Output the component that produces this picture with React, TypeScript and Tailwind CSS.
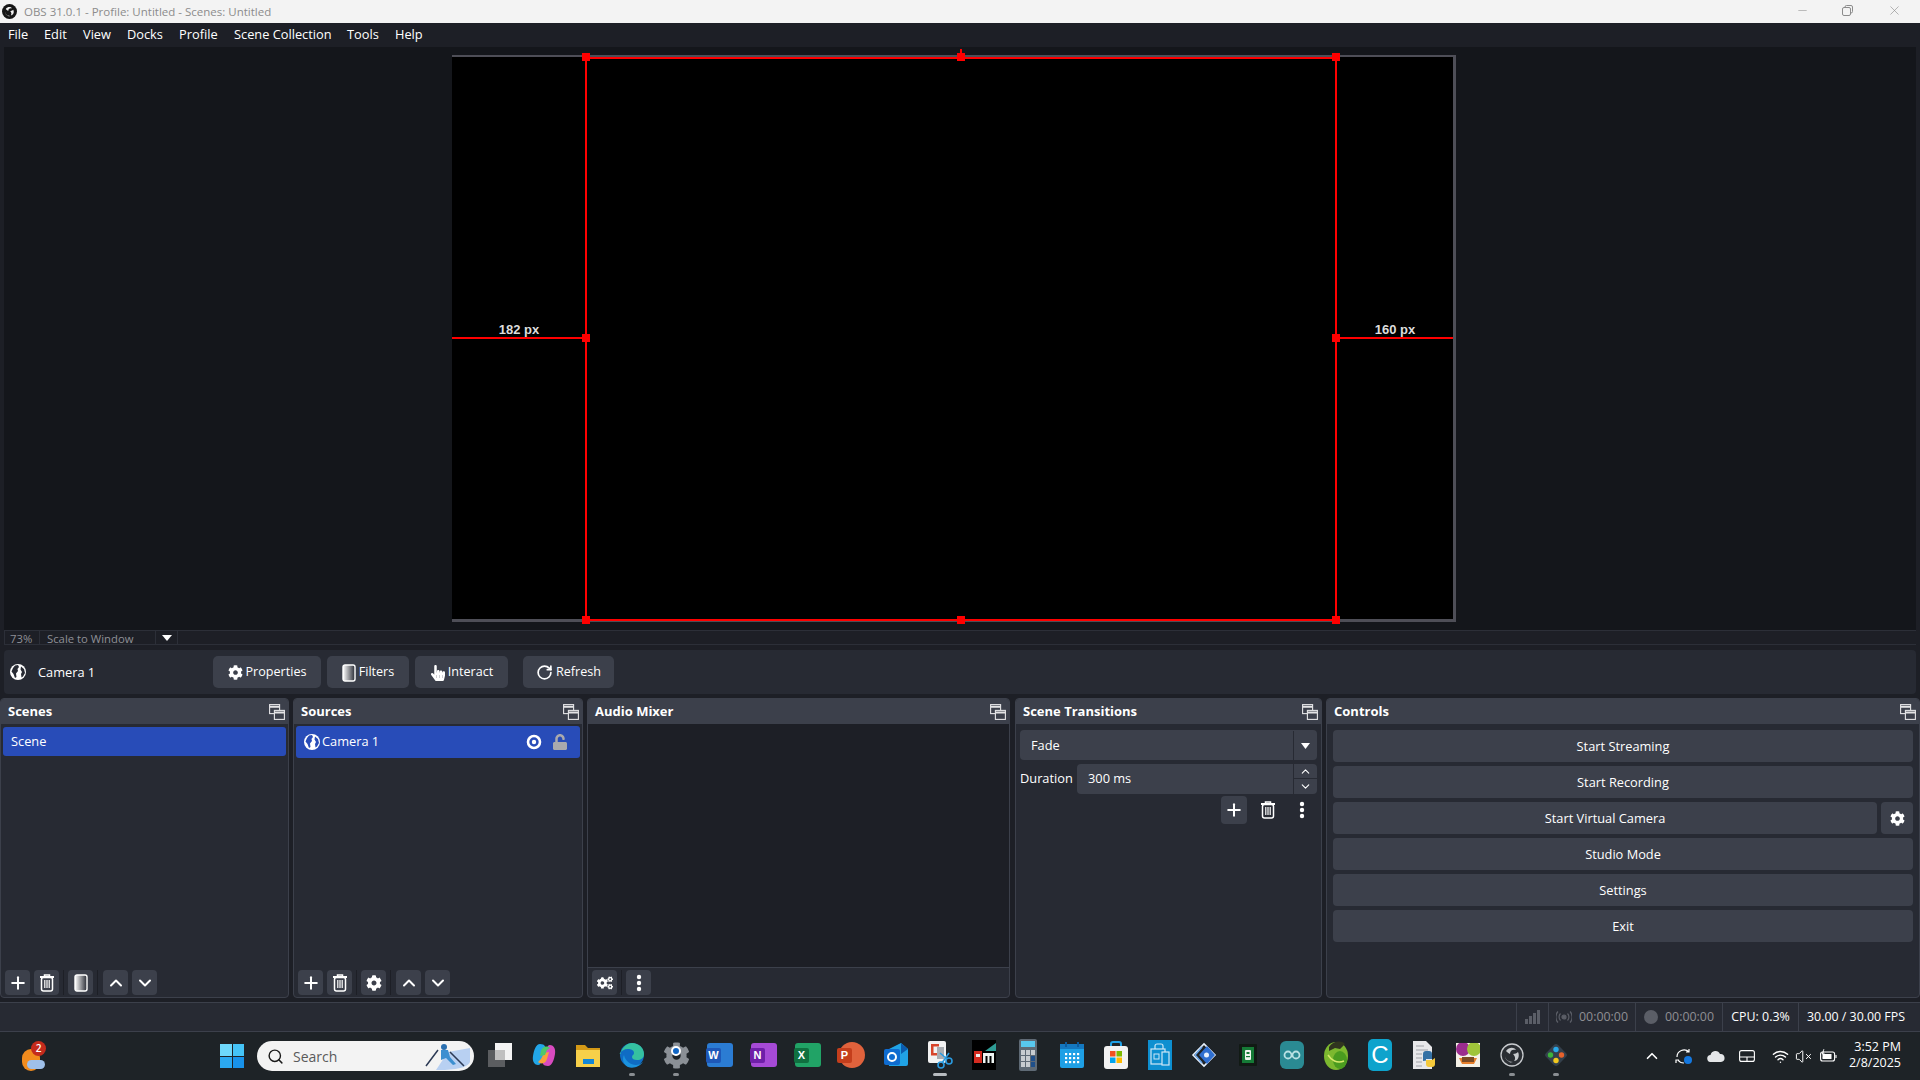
import type { ReactNode } from "react";
import { ChevronDown, ChevronUp, Minus, Plus, RotateCw, Search, VolumeX, Wifi, X } from "lucide-react";
import { FaCog, FaCogs, FaHandPointer, FaUnlock } from "react-icons/fa";

const MENU = [
  { label: "File", w: "w-[36px]" },
  { label: "Edit", w: "w-[39px]" },
  { label: "View", w: "w-[44px]" },
  { label: "Docks", w: "w-[52px]" },
  { label: "Profile", w: "w-[55px]" },
  { label: "Scene Collection", w: "w-[113px]" },
  { label: "Tools", w: "w-[48px]" },
  { label: "Help", w: "w-[40px]" },
];

const CONTROLS = ["Start Streaming", "Start Recording", "Start Virtual Camera", "Studio Mode", "Settings", "Exit"];

function Globe({ size = 16, ink = "#272a33" }: { size?: number; ink?: string }) {
  return (
    <svg width={size} height={size} viewBox="0 0 16 16" className="shrink-0">
      <circle cx="8" cy="8" r="8" fill="#fff" />
      <path d="M5 1.500 8 1 9 3 7.500 5 8 7 6 9.500 6.500 13 5 14 3.500 10 1.500 7.500 3 4Z" fill={ink} />
      <path d="M11 2.500 14 5 15 9 13 12.500 11.500 13.500 11 10 12 8 10.500 5.500Z" fill={ink} />
    </svg>
  );
}

function FilterIcon({ id }: { id: string }) {
  return (
    <svg width="14" height="18" viewBox="0 0 14 18">
      <defs>
        <linearGradient id={id} x1="0" x2="1" y1="0" y2="0">
          <stop offset="0" stopColor="#fff" />
          <stop offset="1" stopColor="#272a33" />
        </linearGradient>
      </defs>
      <rect x="1" y="1" width="12" height="16" rx="2" fill={`url(#${id})`} stroke="#fff" strokeWidth="1.4" />
    </svg>
  );
}

function TrashIcon() {
  return (
    <svg width="14" height="18" viewBox="0 0 14 18" fill="none" stroke="#fff" strokeWidth="1.5">
      <path d="M0 3h14" strokeWidth="1.8" />
      <path d="M4.500 2.500V1h5v1.500" />
      <rect x="1.500" y="3.500" width="11" height="13.500" rx="2" />
      <path d="M4.800 6v8M7 6v8M9.200 6v8" strokeWidth="1.2" />
    </svg>
  );
}

function DotsIcon() {
  return (
    <svg width="6" height="18" viewBox="0 0 6 18" fill="#fff">
      <circle cx="3" cy="3" r="2.2" />
      <circle cx="3" cy="9" r="2.2" />
      <circle cx="3" cy="15" r="2.2" />
    </svg>
  );
}

function PopoutIcon() {
  return (
    <svg width="16" height="16" viewBox="0 0 16 16" fill="none" stroke="#e4e4e6" strokeWidth="1.1">
      <rect x="0.600" y="0.600" width="10" height="9" fill="#3c404b" />
      <path d="M0.600 2.800h10" strokeWidth="2" />
      <rect x="5.400" y="6.400" width="10" height="9" fill="#3c404b" />
      <path d="M5.400 8.400h10" strokeWidth="2" />
    </svg>
  );
}

function ToolBtn({ children }: { children: ReactNode }) {
  return <button className="flex h-[25px] w-[25px] items-center justify-center rounded-[4px] bg-[#3c404b] text-white">{children}</button>;
}

function Sep({ wide }: { wide?: boolean }) {
  return <div className={`ml-[4px] h-[25px] w-px bg-[#1d1f26] ${wide ? "mr-[5px]" : "mr-[4px]"}`} />;
}

function Dock({ title, className, children }: { title: string; className: string; children: ReactNode }) {
  return (
    <section className={`flex h-[300px] flex-col overflow-hidden rounded-[4px] border border-[#3c404b] bg-[#272a33] ${className}`}>
      <header className="flex h-[25px] shrink-0 items-center justify-between bg-[#3c404b] pl-[7px] pr-[3px]">
        <span className="text-[13px] font-bold text-white">{title}</span>
        <PopoutIcon />
      </header>
      {children}
    </section>
  );
}

function PropButton({ icon, label, className }: { icon: ReactNode; label: string; className: string }) {
  return (
    <button className={`flex h-[32px] items-center justify-center rounded-[5px] bg-[#3c404b] pt-[1px] text-[12.6px] text-white ${className}`}>
      {icon}
      {label}
    </button>
  );
}

function Preview() {
  return (
    <div className="h-[583px] bg-[#1d1f26] px-[4px]">
      <div className="h-full bg-[#14161b] pl-[448px] pt-[8px]">
        <div className="relative h-[567px] w-[1004px] border-t-2 border-r-[3px] border-b-[3px] border-[#4e4e57] bg-black">
          {/* transform box of the selected source */}
          <svg className="absolute left-0 top-0 overflow-visible" width="1001" height="562" fill="#ff0000" stroke="none">
            <rect x="133" y="0" width="751" height="2" />
            <rect x="133" y="562" width="751" height="2" />
            <rect x="133" y="0" width="2" height="564" />
            <rect x="883" y="0" width="2" height="564" />
            <rect x="0" y="280" width="133" height="2" />
            <rect x="885" y="280" width="116" height="2" />
            <rect x="508" y="-8" width="2" height="8" />
            {[
              [134, 0], [509, 0], [884, 0],
              [134, 281], [884, 281],
              [134, 563], [509, 563], [884, 563],
            ].map(([x, y]) => (
              <rect key={`${x}-${y}`} x={x - 4} y={y - 4} width="8" height="8" />
            ))}
          </svg>
          <span className="absolute left-[35px] top-[263px] w-[64px] text-center font-['Liberation_Sans'] text-[13px] font-bold text-[#dddddd]">182 px</span>
          <span className="absolute left-[911px] top-[263px] w-[64px] text-center font-['Liberation_Sans'] text-[13px] font-bold text-[#dddddd]">160 px</span>
        </div>
      </div>
    </div>
  );
}

function TaskIcon({ children, mark }: { children: ReactNode; mark?: "dim" | "bright" }) {
  return (
    <div className="relative flex h-[48px] w-[44px] shrink-0 items-center justify-center pb-[2px]">
      {children}
      {mark && <div className={`absolute bottom-[4px] h-[3px] rounded-full ${mark === "bright" ? "w-[14px] bg-[#b8bcc0]" : "w-[6px] bg-[#8a8e92]"}`} />}
    </div>
  );
}

function Tile({ bg, letter, back }: { bg: string; letter: string; back: string }) {
  return (
    <div className={`relative h-[24px] w-[26px] rounded-[3px] ${back}`}>
      <span className={`absolute left-[-1px] top-[5px] flex h-[15px] w-[15px] items-center justify-center rounded-[2px] font-['Liberation_Sans'] text-[11px] font-bold text-white ${bg}`}>{letter}</span>
    </div>
  );
}

function TaskIcons() {
  return (
    <>
      <TaskIcon>
        <svg width="26" height="26" viewBox="0 0 26 26">
          <rect x="1" y="1" width="24" height="24" fill="#8a8d90" />
          <rect x="8" y="1" width="17" height="17" fill="#f4f4f4" />
          <rect x="8" y="8" width="10" height="10" fill="#c0c0c0" />
          <rect x="1" y="8" width="7" height="17" fill="#5b5d60" />
          <rect x="8" y="18" width="10" height="7" fill="#5b5d60" />
          <rect x="18" y="18" width="7" height="7" fill="#1e2327" />
          <rect x="1" y="1" width="7" height="7" fill="#1e2327" />
        </svg>
      </TaskIcon>
      <TaskIcon>
        <svg width="26" height="26" viewBox="0 0 26 26">
          <path d="M9 2C5 2 3 8 2 14c-1 6 2 9 5 9 2 0 3-2 4-5l3-10c1-3 0-6-5-6Z" fill="#22a6e8" />
          <path d="M17 24c4 0 6-6 7-12 1-6-2-9-5-9-2 0-3 2-4 5l-3 10c-1 3 0 6 5 6Z" fill="#d94bc0" />
          <path d="M7 20c4 3 8 1 9-3l2-7-5 1-3 6Z" fill="#f7a23b" />
          <path d="M19 6c-4-3-8-1-9 3l-1 5 5-1 2-5Z" fill="#4ec86b" />
        </svg>
      </TaskIcon>
      <TaskIcon>
        <svg width="26" height="26" viewBox="0 0 26 26">
          <path d="M1 3h9l3 3h12v19H1Z" fill="#d49a16" />
          <rect x="1" y="8" width="24" height="17" fill="#f7d04a" />
          <rect x="8" y="17" width="11" height="5" fill="#1487d6" />
        </svg>
      </TaskIcon>
      <TaskIcon mark="dim">
        <svg width="26" height="26" viewBox="0 0 26 26">
          <circle cx="13" cy="13" r="12" fill="#0f6cc4" />
          <path d="M1.500 12C3 5 8 1 13 1c7 0 12 5 12 11 0 4-3 6-7 6-3 0-5-1-5-3 0-2 2-2 2-4 0-3-3-4-6-4-4 0-7 2-8.500 5Z" fill="#35c1a0" />
          <path d="M9 25c-5-2-6-9-4-12 1 6 7 10 12 10 2 0 5-1 7-3-3 4-9 7-15 5Z" fill="#1b93df" />
        </svg>
      </TaskIcon>
      <TaskIcon mark="dim">
        <FaCog size={27} className="text-[#8b9096]" />
        <div className="absolute left-[17px] top-[14px] h-[10px] w-[10px] rounded-full border-2 border-white bg-[#1166c5]" />
      </TaskIcon>
      <TaskIcon><Tile bg="bg-[#1e58b8]" letter="W" back="bg-[#2b7cd3]" /></TaskIcon>
      <TaskIcon><Tile bg="bg-[#6f1fa8]" letter="N" back="bg-[#a64ad6]" /></TaskIcon>
      <TaskIcon><Tile bg="bg-[#107040]" letter="X" back="bg-[#21a366]" /></TaskIcon>
      <TaskIcon>
        <div className="relative h-[26px] w-[26px] rounded-full bg-[#e0623c]">
          <span className="absolute left-[-2px] top-[6px] flex h-[15px] w-[15px] items-center justify-center rounded-[2px] bg-[#c43e1c] font-['Liberation_Sans'] text-[11px] font-bold text-white">P</span>
        </div>
      </TaskIcon>
      <TaskIcon>
        <svg width="26" height="26" viewBox="0 0 26 26">
          <path d="M4 8 18 1l7 6v15a2 2 0 0 1-2 2H6Z" fill="#20a3e6" />
          <path d="M18 1l7 6-7 5Z" fill="#0b5cae" />
          <rect x="1" y="7" width="16" height="16" rx="2" fill="#0f6cd0" />
          <circle cx="9" cy="15" r="4" fill="none" stroke="#fff" strokeWidth="2" />
        </svg>
      </TaskIcon>
      <TaskIcon mark="bright">
        <svg width="26" height="28" viewBox="0 0 26 28">
          <rect x="1" y="0" width="18" height="22" rx="2" fill="#f2f2f2" />
          <rect x="4" y="3" width="8" height="2.500" fill="#d8452b" />
          <rect x="4" y="3" width="2.500" height="11" fill="#d8452b" />
          <rect x="4" y="12" width="7" height="2.500" fill="#d8452b" />
          <rect x="10" y="6" width="7" height="12" fill="#a9adb2" />
          <circle cx="14" cy="24" r="3" fill="none" stroke="#2a9be0" strokeWidth="1.600" />
          <circle cx="22" cy="20" r="3" fill="none" stroke="#2a9be0" strokeWidth="1.600" />
          <path d="M15 22 22 12M20 18 13 12" stroke="#2a9be0" strokeWidth="1.600" />
        </svg>
      </TaskIcon>
      <TaskIcon>
        <svg width="24" height="30" viewBox="0 0 24 30">
          <rect width="24" height="30" fill="#000" />
          <rect x="2" y="11" width="8" height="12" fill="#d42b20" />
          <rect x="4" y="14" width="4" height="3" fill="#eee" />
          <path d="M11 13h11v10h-2.500v-7h-2v7h-2v-7h-2v7H11Z" fill="#eef5f3" />
          <path d="M13 11 24 3v8Z" fill="#2f9c95" />
        </svg>
      </TaskIcon>
      <TaskIcon>
        <svg width="18" height="32" viewBox="0 0 18 32">
          <rect width="18" height="32" rx="2" fill="#5f6a75" />
          <rect x="2" y="2" width="14" height="6" fill="#58c8ee" />
          {[0, 1, 2].map((r) =>
            [0, 1, 2].map((c) => <rect key={`${r}${c}`} x={2 + c * 5} y={11 + r * 6} width="4" height="5" fill={c === 2 && r > 0 ? "#1f4f8a" : "#c8ccd0"} />),
          )}
        </svg>
      </TaskIcon>
      <TaskIcon>
        <svg width="24" height="26" viewBox="0 0 24 26">
          <rect y="2" width="24" height="24" rx="2" fill="#1ea0e6" />
          <rect y="2" width="24" height="5" fill="#1478c0" />
          <rect x="5" y="0" width="2" height="5" fill="#0e5c9e" />
          <rect x="17" y="0" width="2" height="5" fill="#0e5c9e" />
          {[0, 1, 2].map((r) =>
            [0, 1, 2, 3].map((c) => <rect key={`${r}${c}`} x={5 + c * 4} y={11 + r * 4} width="2.200" height="2.200" fill="#fff" />),
          )}
        </svg>
      </TaskIcon>
      <TaskIcon>
        <svg width="26" height="28" viewBox="0 0 26 28">
          <path d="M8 6V3a2 2 0 0 1 2-2h6a2 2 0 0 1 2 2v3" fill="none" stroke="#1ea0e6" strokeWidth="2" />
          <rect x="1" y="5" width="24" height="23" rx="3" fill="#f2f2f2" />
          <rect x="7" y="10" width="5.500" height="5.500" fill="#f25022" />
          <rect x="13.500" y="10" width="5.500" height="5.500" fill="#7fba00" />
          <rect x="7" y="16.500" width="5.500" height="5.500" fill="#00a4ef" />
          <rect x="13.500" y="16.500" width="5.500" height="5.500" fill="#ffb900" />
        </svg>
      </TaskIcon>
      <TaskIcon>
        <svg width="24" height="30" viewBox="0 0 24 30" fill="none">
          <rect width="24" height="30" fill="#0d8fd0" />
          <path d="M7 9V6a2 2 0 0 1 2-2h4a2 2 0 0 1 2 2v3" stroke="#cde8f7" strokeWidth="1.200" />
          <rect x="3" y="9" width="14" height="15" stroke="#cde8f7" strokeWidth="1.200" />
          <rect x="14" y="12" width="7" height="13" stroke="#cde8f7" strokeWidth="1.200" fill="#0d8fd0" />
          <rect x="6" y="14" width="5" height="5" stroke="#cde8f7" />
        </svg>
      </TaskIcon>
      <TaskIcon>
        <svg width="26" height="26" viewBox="0 0 26 26" fill="none">
          <path d="M2 13 13 2l11 11-11 11Z" stroke="#e8f1fb" strokeWidth="1.600" />
          <path d="M8 13 16 4l8 9-8 9Z" fill="#2f6fd0" />
          <path d="M4 13 11 5M4 13l7 8" stroke="#6fa8ea" strokeWidth="1.600" />
          <circle cx="15.500" cy="13" r="2.500" fill="#e8f1fb" />
        </svg>
      </TaskIcon>
      <TaskIcon>
        <svg width="24" height="26" viewBox="0 0 24 26">
          <rect x="3" y="2" width="18" height="22" rx="1" fill="#111a14" />
          <rect x="6" y="5" width="12" height="16" fill="#157a36" />
          <rect x="9" y="8" width="6" height="10" rx="1" fill="#eef5ee" />
          <rect x="10.500" y="10" width="3" height="2" fill="#157a36" />
          <rect x="10" y="14" width="4" height="1.200" fill="#157a36" />
        </svg>
      </TaskIcon>
      <TaskIcon>
        <svg width="24" height="28" viewBox="0 0 24 28" fill="none">
          <rect width="24" height="28" rx="6" fill="#2a8a93" />
          <circle cx="8" cy="14" r="3.500" stroke="#b9e2e4" strokeWidth="1.800" />
          <circle cx="16" cy="14" r="3.500" stroke="#b9e2e4" strokeWidth="1.800" />
        </svg>
      </TaskIcon>
      <TaskIcon>
        <svg width="26" height="32" viewBox="0 0 26 32">
          <ellipse cx="13" cy="17" rx="12" ry="14" fill="#7cb82f" />
          <ellipse cx="17" cy="21" rx="7" ry="9" fill="#4a9b1f" />
          <path d="M6 8c4-6 12-7 16-3l-5 5-5-1-6 3Z" fill="#30351f" />
          <path d="M5 16c3 5 9 9 16 6" stroke="#d6e86a" strokeWidth="1.500" fill="none" />
        </svg>
      </TaskIcon>
      <TaskIcon>
        <div className="flex h-[32px] w-[24px] items-center justify-center rounded-[5px] bg-[#0ea3cc] font-['Liberation_Sans'] text-[24px] text-white">C</div>
      </TaskIcon>
      <TaskIcon>
        <svg width="24" height="30" viewBox="0 0 24 30">
          <path d="M1 1h13l6 6v22H1Z" fill="#e8e8ea" />
          <path d="M4 6h8M4 10h12M4 14h6M4 18h6M4 22h6M4 26h6" stroke="#a0a2a8" strokeWidth="1.200" />
          <path d="M11 14a3 3 0 0 1 3-3h3a3 3 0 0 1 3 3v5h-6v1h4l-7 1Z" fill="#3572a5" />
          <path d="M23 18v6a3 3 0 0 1-3 3h-3a3 3 0 0 1-3-3v-4h6Z" fill="#f5c93b" />
        </svg>
      </TaskIcon>
      <TaskIcon>
        <svg width="24" height="24" viewBox="0 0 24 24">
          <rect width="24" height="24" fill="#f4f0e6" />
          <circle cx="7" cy="6" r="7" fill="#9b2c8e" />
          <circle cx="18" cy="6" r="7" fill="#9fc43a" />
          <path d="M3 15h18l-3 6H6Z" fill="#e8802c" />
          <rect x="6" y="14" width="12" height="5" fill="#7a4a24" />
        </svg>
      </TaskIcon>
      <TaskIcon mark="dim">
        <svg width="24" height="24" viewBox="0 0 24 24" fill="none">
          <circle cx="12" cy="12" r="11" fill="#2a2e33" stroke="#c8cbce" strokeWidth="1.300" />
          <path d="M6 8c3-4 8-4 10-1-3-1-6 0-6 4-2-1-3-2-4-3ZM18 9c2 4 0 9-4 9 2-2 1-5-1-7 2 0 4-1 5-2ZM5 12c0 4 3 7 8 7-4 1-3 0-5-1-2-1-3-3-3-6Z" fill="#c8cbce" />
        </svg>
      </TaskIcon>
      <TaskIcon mark="dim">
        <svg width="24" height="24" viewBox="0 0 24 24">
          <rect x="3.500" y="3.500" width="17" height="17" rx="3" transform="rotate(45 12 12)" fill="#34404c" />
          <circle cx="12" cy="6.500" r="2.700" fill="#29a8e8" />
          <circle cx="6.500" cy="12" r="2.700" fill="#3cb23c" />
          <circle cx="17.500" cy="12" r="2.700" fill="#e8622c" />
          <circle cx="12" cy="17.500" r="2.700" fill="#f2c81e" />
        </svg>
      </TaskIcon>
    </>
  );
}

function Tray() {
  return (
    <div className="ml-[74px] flex h-full items-center text-white">
      <ChevronUp size={18} strokeWidth={2.2} className="ml-[-9px] w-[18px]" />
      <svg width="18" height="18" viewBox="0 0 18 18" fill="none" stroke="#fff" strokeWidth="1.200" className="ml-[14px]">
        <path d="M2 10a7 7 0 0 1 12-5M14 2v3h-3M9 16a7 7 0 0 1-6-3M1 16v-3h3" />
        <circle cx="13" cy="13" r="4" fill="#1478e0" stroke="none" />
      </svg>
      <svg width="18" height="12" viewBox="0 0 18 12" fill="#e4e6e8" className="ml-[14px]">
        <path d="M4 12a3.500 3.500 0 0 1-.5-7A5 5 0 0 1 13 4a4 4 0 0 1 1 8Z" />
      </svg>
      <svg width="16" height="12" viewBox="0 0 16 12" fill="none" stroke="#fff" strokeWidth="1.100" className="ml-[14px]">
        <rect x="0.600" y="0.600" width="14.800" height="10.800" rx="2" />
        <path d="M0.600 7h14.800M8 7v4.400" />
      </svg>
      <Wifi size={17} strokeWidth={2} className="ml-[17px]" />
      <VolumeX size={17} strokeWidth={1.400} className="ml-[6px]" />
      <svg width="17" height="14" viewBox="0 0 17 14" fill="none" stroke="#fff" strokeWidth="1.100" className="ml-[8px]">
        <rect x="0.600" y="3" width="14" height="9" rx="2" />
        <rect x="2.500" y="5" width="9" height="5" fill="#fff" stroke="none" />
        <path d="M16 6v3" />
        <path d="M4 0 2 5h3L3 9" fill="#fff" strokeWidth="0.700" />
      </svg>
      <div className="flex w-[64px] flex-col items-end pb-[2px] text-[12.5px] leading-[16px] text-white">
        <span>3:52 PM</span>
        <span>2/8/2025</span>
      </div>
    </div>
  );
}

export default function App() {
  return (
    <div className="flex h-[1080px] w-[1920px] flex-col overflow-hidden bg-[#1d1f26] font-['Open_Sans',sans-serif] text-[12.8px] text-white">
      <div className="flex h-[23px] shrink-0 items-center bg-[#f3f3f3] pl-[2px]">
        <svg width="15" height="15" viewBox="0 0 24 24" fill="none">
          <circle cx="12" cy="12" r="12" fill="#151515" />
          <path d="M6 8c3-4 8-4 10-1-3-1-6 0-6 4-2-1-3-2-4-3ZM18 9c2 4 0 9-4 9 2-2 1-5-1-7 2 0 4-1 5-2ZM5 12c0 4 3 7 8 7-4 1-3 0-5-1-2-1-3-3-3-6Z" fill="#f3f3f3" />
        </svg>
        <span className="ml-[7px] text-[11.5px] text-[#8c8c8c]">OBS 31.0.1 - Profile: Untitled - Scenes: Untitled</span>
        <div className="ml-auto flex items-center pb-[2px] text-[#8c8c8c]">
          <Minus size={13} strokeWidth={1} className="mr-[33px]" />
          <svg width="11" height="11" viewBox="0 0 11 11" fill="none" stroke="currentColor" className="mr-[34px]">
            <rect x="0.500" y="2.500" width="8" height="8" rx="1.500" />
            <path d="M3 2.500V2a1.500 1.500 0 0 1 1.500-1.500H9A1.500 1.500 0 0 1 10.500 2v4.500A1.500 1.500 0 0 1 9 8h-.5" />
          </svg>
          <X size={15} strokeWidth={1} className="mr-[18px]" />
        </div>
      </div>

      <nav className="flex h-[24px] shrink-0 items-center pl-[8px]">
        {MENU.map((m) => (
          <span key={m.label} className={m.w}>{m.label}</span>
        ))}
      </nav>

      <Preview />

      <div className="mx-[4px] flex h-[15px] shrink-0 border-y border-[#2c2f38] text-[11.3px] leading-[15px] text-[#8f9096]">
        <span className="w-[35px] border-l border-[#2c2f38] pl-[5px]">73%</span>
        <span className="w-[116px] border-l border-[#2c2f38] pl-[7px]">Scale to Window</span>
        <span className="flex w-[23px] items-center justify-center border-x border-[#2c2f38]">
          <svg width="10" height="6" viewBox="0 0 10 6" fill="#fff"><path d="M0 0h10L5 6Z" /></svg>
        </span>
      </div>

      <div className="mx-[4px] mt-[5px] flex h-[44px] shrink-0 items-center rounded-[4px] bg-[#272a33]">
        <div className="ml-[6px] flex w-[203px] items-center gap-[12px]">
          <Globe size={16} />
          <span className="pt-[1px]">Camera 1</span>
        </div>
        <PropButton icon={<FaCog size={15} />} label="Properties" className="w-[108px] gap-[3px]" />
        <PropButton icon={<FilterIcon id="ctx-filter" />} label="Filters" className="ml-[6px] w-[82px] gap-[3px]" />
        <PropButton icon={<FaHandPointer size={16} />} label="Interact" className="ml-[6px] w-[93px] gap-[2px]" />
        <PropButton icon={<RotateCw size={17} strokeWidth={2.4} />} label="Refresh" className="ml-[15px] w-[91px] gap-[3px]" />
      </div>

      <div className="mt-[4px] flex h-[300px] shrink-0">
        <Dock title="Scenes" className="w-[289px]">
          <div className="mx-[2px] mt-[3px] flex h-[29px] items-center rounded-[3px] bg-[#284cb8] pl-[8px]">Scene</div>
          <div className="mt-auto flex items-center pb-[2px] pl-[4px]">
            <ToolBtn><Plus size={20} strokeWidth={2.4} /></ToolBtn>
            <div className="w-[4px]" />
            <ToolBtn><TrashIcon /></ToolBtn>
            <Sep />
            <ToolBtn><FilterIcon id="scene-filter" /></ToolBtn>
            <Sep wide />
            <ToolBtn><ChevronUp size={20} strokeWidth={2.4} /></ToolBtn>
            <div className="w-[4px]" />
            <ToolBtn><ChevronDown size={20} strokeWidth={2.4} /></ToolBtn>
          </div>
        </Dock>
        <Dock title="Sources" className="ml-[4px] w-[290px]">
          <div className="mx-[2px] mt-[2px] flex h-[32px] items-center rounded-[3px] bg-[#284cb8] pl-[8px] pr-[12px]">
            <Globe size={16} ink="#284cb8" />
            <span className="ml-[2px]">Camera 1</span>
            <svg width="16" height="16" viewBox="0 0 16 16" fill="none" className="ml-auto">
              <circle cx="8" cy="8" r="6" stroke="#fff" strokeWidth="2.600" />
              <circle cx="8" cy="8" r="2.200" fill="#fff" />
            </svg>
            <FaUnlock size={16} className="ml-[10px] text-[#a9a9ad]" />
          </div>
          <div className="mt-auto flex items-center pb-[2px] pl-[4px]">
            <ToolBtn><Plus size={20} strokeWidth={2.4} /></ToolBtn>
            <div className="w-[4px]" />
            <ToolBtn><TrashIcon /></ToolBtn>
            <Sep />
            <ToolBtn><FaCog size={16} /></ToolBtn>
            <Sep wide />
            <ToolBtn><ChevronUp size={20} strokeWidth={2.4} /></ToolBtn>
            <div className="w-[4px]" />
            <ToolBtn><ChevronDown size={20} strokeWidth={2.4} /></ToolBtn>
          </div>
        </Dock>
        <Dock title="Audio Mixer" className="ml-[4px] w-[423px]">
          <div className="h-[244px] border-b border-[#3c404b] bg-[#1d1f26]" />
          <div className="mt-auto flex items-center pb-[2px] pl-[4px]">
            <ToolBtn><FaCogs size={16} /></ToolBtn>
            <Sep />
            <ToolBtn><DotsIcon /></ToolBtn>
          </div>
        </Dock>
        <Dock title="Scene Transitions" className="ml-[5px] w-[307px]">
          <div className="px-[4px] pt-[6px]">
            <div className="flex h-[30px] items-center rounded-[4px] bg-[#3c404b] pl-[11px] pt-[1px]">
              Fade
              <div className="ml-auto flex h-full w-[24px] items-center justify-center border-l border-[#272a33]">
                <svg width="9" height="6" viewBox="0 0 9 6" fill="#fff"><path d="M0 0h9L4.500 6Z" /></svg>
              </div>
            </div>
            <div className="mt-[4px] flex items-center">
              <span className="w-[57px]">Duration</span>
              <div className="flex h-[30px] flex-1 items-center rounded-[4px] bg-[#3c404b] pl-[11px]">
                300 ms
                <div className="ml-auto flex h-full w-[24px] flex-col border-l border-[#272a33]">
                  <div className="flex h-1/2 items-center justify-center border-b border-[#272a33]"><ChevronUp size={13} strokeWidth={2} /></div>
                  <div className="flex h-1/2 items-center justify-center"><ChevronDown size={13} strokeWidth={2} /></div>
                </div>
              </div>
            </div>
            <div className="mt-[2px] flex items-center justify-end pr-[12px]">
              <div className="flex h-[28px] w-[26px] items-center justify-center rounded-[4px] bg-[#3c404b]"><Plus size={20} strokeWidth={2.4} /></div>
              <div className="ml-[13px] flex w-[16px] justify-center"><TrashIcon /></div>
              <div className="ml-[23px]"><DotsIcon /></div>
            </div>
          </div>
        </Dock>
        <Dock title="Controls" className="ml-[4px] w-[594px]">
          <div className="flex flex-col gap-[4px] px-[6px] pt-[6px]">
            {CONTROLS.map((c) =>
              c === "Start Virtual Camera" ? (
                <div key={c} className="flex gap-[4px]">
                  <button className="h-[32px] flex-1 rounded-[4px] bg-[#3c404b] pt-[1px] text-white">{c}</button>
                  <button className="flex h-[32px] w-[32px] items-center justify-center rounded-[4px] bg-[#3c404b] text-white"><FaCog size={15} /></button>
                </div>
              ) : (
                <button key={c} className="h-[32px] rounded-[4px] bg-[#3c404b] pt-[1px] text-white">{c}</button>
              ),
            )}
          </div>
        </Dock>
      </div>

      <footer className="mt-[4px] flex h-[30px] shrink-0 items-center justify-end border-y border-[#3c404b] bg-[#272a33] pr-[15px] text-[12.4px]">
        <div className="flex h-full w-[32px] items-center justify-center border-l border-[#3c404b]">
          <svg width="16" height="14" viewBox="0 0 16 14" fill="#5b5e67">
            <rect x="0" y="9" width="3" height="5" /><rect x="4" y="6" width="3" height="8" /><rect x="8" y="3" width="3" height="11" /><rect x="12" y="0" width="3" height="14" />
          </svg>
        </div>
        <div className="flex h-full w-[87px] items-center justify-center gap-[7px] border-l border-[#3c404b] text-[#8f8f93]">
          <svg width="16" height="14" viewBox="0 0 16 14" fill="none" stroke="#5b5e67" strokeWidth="1.200">
            <circle cx="8" cy="7" r="2" fill="#5b5e67" /><path d="M4.500 3.500a5 5 0 0 0 0 7M11.500 3.500a5 5 0 0 1 0 7M2 1.500a8 8 0 0 0 0 11M14 1.500a8 8 0 0 1 0 11" />
          </svg>
          00:00:00
        </div>
        <div className="flex h-full w-[87px] items-center justify-center gap-[7px] border-l border-[#3c404b] text-[#8f8f93]">
          <div className="h-[14px] w-[14px] rounded-full bg-[#5b5e67]" />
          00:00:00
        </div>
        <div className="flex h-full w-[76px] items-center justify-center border-l border-[#3c404b]">CPU: 0.3%</div>
        <div className="flex h-full w-[107px] items-center justify-end border-l border-[#3c404b]">30.00 / 30.00 FPS</div>
      </footer>

      <div className="flex h-[48px] shrink-0 items-center bg-[#1e2327]">
        <div className="relative ml-[20px] h-[26px] w-[26px]">
          <div className="absolute left-[2px] top-[6px] h-[22px] w-[18px] rounded-full bg-[#f28c1e]" />
          <div className="absolute left-[7px] top-[17px] h-[9px] w-[18px] rounded-[5px] bg-[#9fc0ea]" />
          <div className="absolute left-[11px] top-[-2px] flex h-[15px] w-[15px] items-center justify-center rounded-full bg-[#c42b1c] text-[10px] font-semibold text-white">2</div>
        </div>
        <div className="ml-[174px] grid h-[24px] w-[24px] grid-cols-2 gap-[1px]">
          <div className="bg-[#6fd8fb]" /><div className="bg-[#45c4f7]" /><div className="bg-[#2ba8f0]" /><div className="bg-[#1892ea]" />
        </div>
        <div className="ml-[13px] flex h-[30px] w-[217px] items-center rounded-full bg-[#f3f3f3] pl-[10px] pr-[4px] text-[14px] text-[#5a5a5a]">
          <Search size={17} strokeWidth={2} className="text-[#1a1a1a]" />
          <span className="ml-[9px]">Search</span>
          <svg width="46" height="28" viewBox="0 0 46 28" className="ml-auto">
            <path d="M12 28 24 10l22-4v14c-4 8-24 8-34 8Z" fill="#b8d0f2" />
            <path d="M2 24 14 8M40 24 26 10" stroke="#2c3a55" strokeWidth="1.500" />
            <circle cx="20" cy="5" r="3" fill="#2a6fb0" />
            <path d="M17 8h7l2 7 6 7-3 1-7-7-5 2Z" fill="#3c8fd0" />
          </svg>
        </div>
        <div className="ml-[4px] flex items-center">
          <TaskIcons />
        </div>
        <Tray />
      </div>
    </div>
  );
}
